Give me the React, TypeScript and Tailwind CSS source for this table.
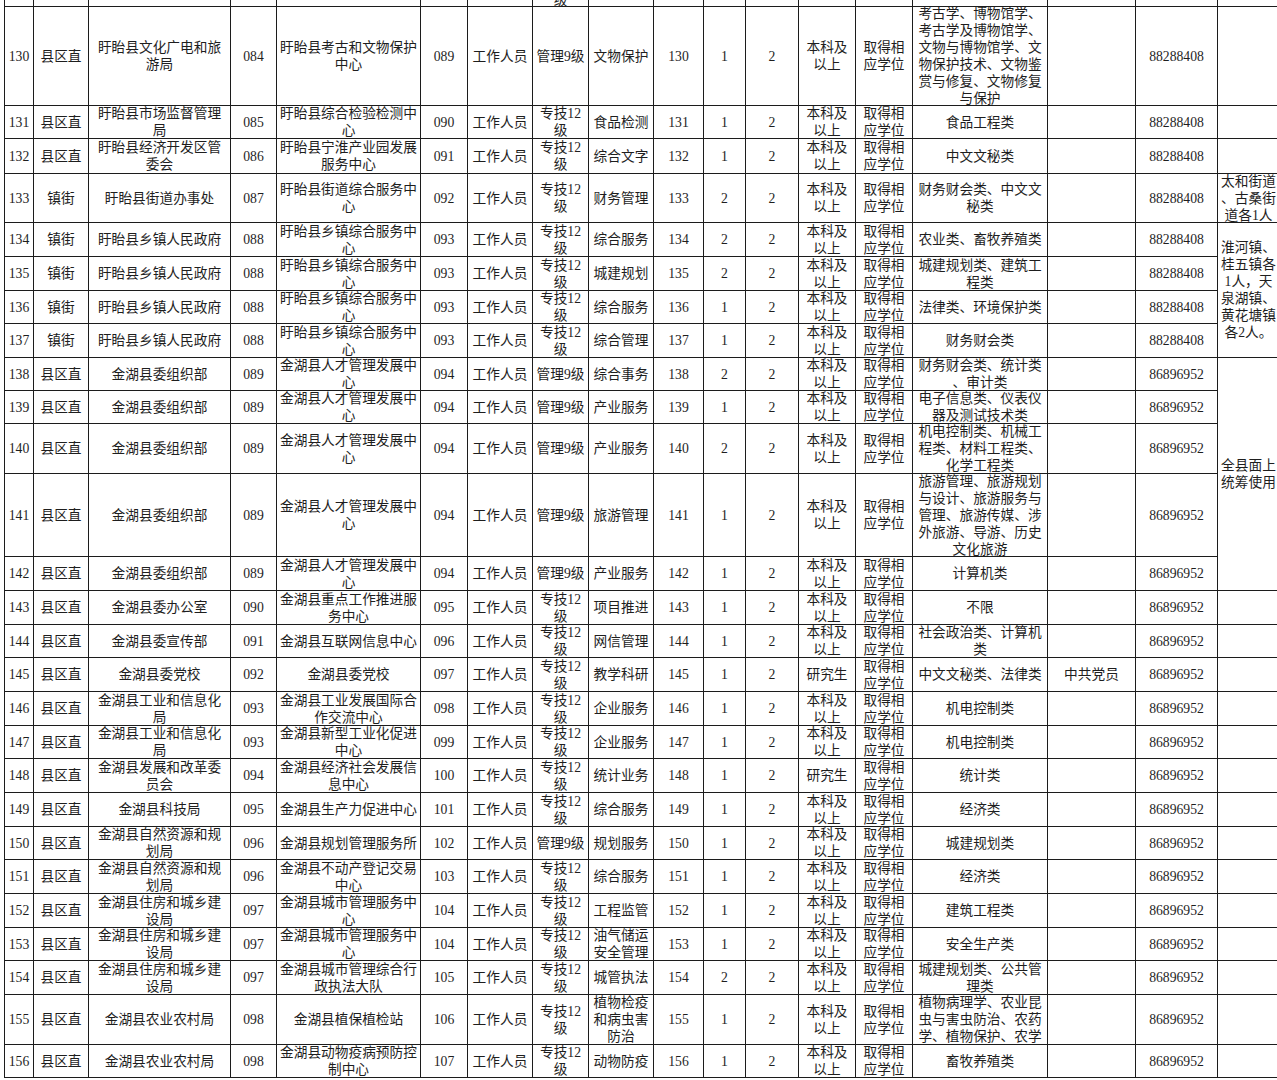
import React from 'react'

const W = '工作人员'
const Z = '专技12\n级'
const G = '管理9级'
const B = '本科及\n以上'
const D = '取得相\n应学位'
const XY = '盱眙县乡镇人民政府'
const XZ = '盱眙县乡镇综合服务中\n心'
const ZZ = '金湖县委组织部'
const RC = '金湖县人才管理发展中\n心'
const T1 = '88288408'
const T2 = '86896952'

// remark: string = own cell, number = merged cell text below spans that many rows, null = covered by a merged cell
type Row = { cells: string[]; remark: string | null; span?: number }

const rows: Row[] = [
  { cells: ['130', '县区直', '盱眙县文化广电和旅\n游局', '084', '盱眙县考古和文物保护\n中心', '089', W, G, '文物保护', '130', '1', '2', B, D, '考古学、博物馆学、\n考古学及博物馆学、\n文物与博物馆学、文\n物保护技术、文物鉴\n赏与修复、文物修复\n与保护', '', T1], remark: '' },
  { cells: ['131', '县区直', '盱眙县市场监督管理\n局', '085', '盱眙县综合检验检测中\n心', '090', W, Z, '食品检测', '131', '1', '2', B, D, '食品工程类', '', T1], remark: '' },
  { cells: ['132', '县区直', '盱眙县经济开发区管\n委会', '086', '盱眙县宁淮产业园发展\n服务中心', '091', W, Z, '综合文字', '132', '1', '2', B, D, '中文文秘类', '', T1], remark: '' },
  { cells: ['133', '镇街', '盱眙县街道办事处', '087', '盱眙县街道综合服务中\n心', '092', W, Z, '财务管理', '133', '2', '2', B, D, '财务财会类、中文文\n秘类', '', T1], remark: '太和街道\n、古桑街\n道各1人' },
  { cells: ['134', '镇街', XY, '088', XZ, '093', W, Z, '综合服务', '134', '2', '2', B, D, '农业类、畜牧养殖类', '', T1], remark: '淮河镇、\n桂五镇各\n1人，天\n泉湖镇、\n黄花塘镇\n各2人。', span: 4 },
  { cells: ['135', '镇街', XY, '088', XZ, '093', W, Z, '城建规划', '135', '2', '2', B, D, '城建规划类、建筑工\n程类', '', T1], remark: null },
  { cells: ['136', '镇街', XY, '088', XZ, '093', W, Z, '综合服务', '136', '1', '2', B, D, '法律类、环境保护类', '', T1], remark: null },
  { cells: ['137', '镇街', XY, '088', XZ, '093', W, Z, '综合管理', '137', '1', '2', B, D, '财务财会类', '', T1], remark: null },
  { cells: ['138', '县区直', ZZ, '089', RC, '094', W, G, '综合事务', '138', '2', '2', B, D, '财务财会类、统计类\n、审计类', '', T2], remark: '全县面上\n统筹使用', span: 5 },
  { cells: ['139', '县区直', ZZ, '089', RC, '094', W, G, '产业服务', '139', '1', '2', B, D, '电子信息类、仪表仪\n器及测试技术类', '', T2], remark: null },
  { cells: ['140', '县区直', ZZ, '089', RC, '094', W, G, '产业服务', '140', '2', '2', B, D, '机电控制类、机械工\n程类、材料工程类、\n化学工程类', '', T2], remark: null },
  { cells: ['141', '县区直', ZZ, '089', RC, '094', W, G, '旅游管理', '141', '1', '2', B, D, '旅游管理、旅游规划\n与设计、旅游服务与\n管理、旅游传媒、涉\n外旅游、导游、历史\n文化旅游', '', T2], remark: null },
  { cells: ['142', '县区直', ZZ, '089', RC, '094', W, G, '产业服务', '142', '1', '2', B, D, '计算机类', '', T2], remark: null },
  { cells: ['143', '县区直', '金湖县委办公室', '090', '金湖县重点工作推进服\n务中心', '095', W, Z, '项目推进', '143', '1', '2', B, D, '不限', '', T2], remark: '' },
  { cells: ['144', '县区直', '金湖县委宣传部', '091', '金湖县互联网信息中心', '096', W, Z, '网信管理', '144', '1', '2', B, D, '社会政治类、计算机\n类', '', T2], remark: '' },
  { cells: ['145', '县区直', '金湖县委党校', '092', '金湖县委党校', '097', W, Z, '教学科研', '145', '1', '2', '研究生', D, '中文文秘类、法律类', '中共党员', T2], remark: '' },
  { cells: ['146', '县区直', '金湖县工业和信息化\n局', '093', '金湖县工业发展国际合\n作交流中心', '098', W, Z, '企业服务', '146', '1', '2', B, D, '机电控制类', '', T2], remark: '' },
  { cells: ['147', '县区直', '金湖县工业和信息化\n局', '093', '金湖县新型工业化促进\n中心', '099', W, Z, '企业服务', '147', '1', '2', B, D, '机电控制类', '', T2], remark: '' },
  { cells: ['148', '县区直', '金湖县发展和改革委\n员会', '094', '金湖县经济社会发展信\n息中心', '100', W, Z, '统计业务', '148', '1', '2', '研究生', D, '统计类', '', T2], remark: '' },
  { cells: ['149', '县区直', '金湖县科技局', '095', '金湖县生产力促进中心', '101', W, Z, '综合服务', '149', '1', '2', B, D, '经济类', '', T2], remark: '' },
  { cells: ['150', '县区直', '金湖县自然资源和规\n划局', '096', '金湖县规划管理服务所', '102', W, G, '规划服务', '150', '1', '2', B, D, '城建规划类', '', T2], remark: '' },
  { cells: ['151', '县区直', '金湖县自然资源和规\n划局', '096', '金湖县不动产登记交易\n中心', '103', W, Z, '综合服务', '151', '1', '2', B, D, '经济类', '', T2], remark: '' },
  { cells: ['152', '县区直', '金湖县住房和城乡建\n设局', '097', '金湖县城市管理服务中\n心', '104', W, Z, '工程监管', '152', '1', '2', B, D, '建筑工程类', '', T2], remark: '' },
  { cells: ['153', '县区直', '金湖县住房和城乡建\n设局', '097', '金湖县城市管理服务中\n心', '104', W, Z, '油气储运\n安全管理', '153', '1', '2', B, D, '安全生产类', '', T2], remark: '' },
  { cells: ['154', '县区直', '金湖县住房和城乡建\n设局', '097', '金湖县城市管理综合行\n政执法大队', '105', W, Z, '城管执法', '154', '2', '2', B, D, '城建规划类、公共管\n理类', '', T2], remark: '' },
  { cells: ['155', '县区直', '金湖县农业农村局', '098', '金湖县植保植检站', '106', W, Z, '植物检疫\n和病虫害\n防治', '155', '1', '2', B, D, '植物病理学、农业昆\n虫与害虫防治、农药\n学、植物保护、农学', '', T2], remark: '' },
  { cells: ['156', '县区直', '金湖县农业农村局', '098', '金湖县动物疫病预防控\n制中心', '107', W, Z, '动物防疫', '156', '1', '2', B, D, '畜牧养殖类', '', T2], remark: '' },
]

function Cell({ text, className = '' }: { text: string; className?: string }) {
  return (
    <div className={`flex items-center justify-center overflow-hidden border-r border-b border-[#1c1c1c] text-center whitespace-pre-line ${className}`}>
      {text}
    </div>
  )
}

export default function App() {
  return (
    <div className="w-[1277px] h-[1080px] overflow-hidden bg-white">
      <div className="ml-[4px] grid w-max border-l border-[#1c1c1c] grid-cols-[29px_55px_142px_46px_144px_47px_65px_56px_65px_50px_42px_53px_57px_57px_135px_88px_82px_62px] grid-rows-[7px_99px_33px_35px_49px_34px_34px_33px_34px_33px_33px_50px_83px_34px_34px_33px_34px_34px_33px_34px_34px_33px_34px_34px_33px_34px_50px_33px] font-['Liberation_Serif','Noto_Sans_CJK_SC',serif] text-[13.7px] leading-[17px] text-[#1e1e1e]">
        {/* cut-off row above 130 */}
        {Array.from({ length: 18 }).map((_, i) =>
          i === 7 ? (
            <div key={i} className="flex items-end justify-center overflow-hidden border-r border-b border-[#1c1c1c]">
              <span className="-mb-[3px]">级</span>
            </div>
          ) : (
            <Cell key={i} text="" />
          )
        )}

        {rows.map((r) => (
          <React.Fragment key={r.cells[0]}>
            {r.cells.map((c, i) => (
              <Cell key={i} text={c} />
            ))}
            {r.remark !== null &&
              (r.span === 4 ? (
                <Cell text={r.remark} className="row-span-4" />
              ) : r.span === 5 ? (
                <Cell text={r.remark} className="row-span-5" />
              ) : (
                <Cell text={r.remark} />
              ))}
          </React.Fragment>
        ))}
      </div>
    </div>
  )
}
